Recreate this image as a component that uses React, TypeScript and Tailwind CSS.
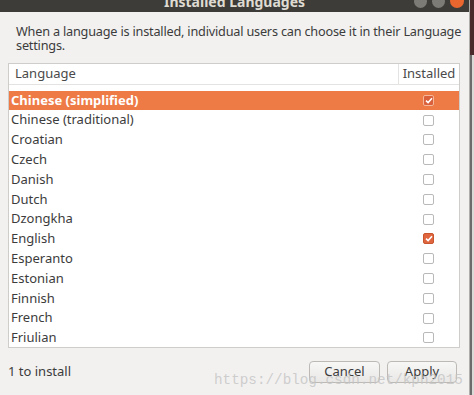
import React from "react";

type Lang = { name: string; installed: boolean };

const languages: Lang[] = [
  { name: "Chinese (simplified)", installed: true },
  { name: "Chinese (traditional)", installed: false },
  { name: "Croatian", installed: false },
  { name: "Czech", installed: false },
  { name: "Danish", installed: false },
  { name: "Dutch", installed: false },
  { name: "Dzongkha", installed: false },
  { name: "English", installed: true },
  { name: "Esperanto", installed: false },
  { name: "Estonian", installed: false },
  { name: "Finnish", installed: false },
  { name: "French", installed: false },
  { name: "Friulian", installed: false },
];

const Check = ({ checked, selected }: { checked: boolean; selected: boolean }) => {
  if (checked) {
    return (
      <div
        className={`w-[11px] h-[11px] rounded-[2px] flex items-center justify-center ${
          selected ? "bg-[#d9603a] border border-[#f4b79a]" : "bg-[#e0663f] border border-[#c9552f]"
        }`}
      >
        <svg width="8" height="7" viewBox="0 0 8 7">
          <path d="M1 3.6 L3.1 5.6 L7 1.2" fill="none" stroke="white" strokeWidth="1.6" />
        </svg>
      </div>
    );
  }
  return <div className="w-[11px] h-[11px] rounded-[2px] border border-[#b9b9b9] bg-white" />;
};

export default function App() {
  return (
    <div
      className="w-[474px] h-[395px] flex bg-[#f2f1f0] overflow-hidden relative"
      style={{ fontFamily: '"Noto Sans", "Open Sans", sans-serif' }}
    >
      <div className="w-[469px] flex flex-col">
        {/* title bar */}
        <div className="h-[12px] bg-[#3d3c38] relative overflow-hidden flex justify-center">
          <div className="text-[14px] font-bold text-[#dfdbd2] leading-none -mt-[5px]">Installed Languages</div>
          <div className="absolute right-[5px] -top-[6px] flex gap-[5px] items-center">
            <div className="w-[13px] h-[13px] rounded-full bg-[#7d7b76]" />
            <div className="w-[13px] h-[13px] rounded-full bg-[#7d7b76]" />
            <div className="w-[14px] h-[14px] rounded-full bg-[#e9662e]" />
          </div>
        </div>

        <p className="pl-[16px] pr-[4px] pt-[12px] text-[12.7px] leading-[14px] tracking-[-0.2px] text-[#3c3c3c]">
          When a language is installed, individual users can choose it in their Language settings.
        </p>

        {/* tree view */}
        <div className="ml-[8px] mt-[11px] w-[452px] h-[285px] border border-[#cfcdca] bg-white flex flex-col">
          <div className="h-[24px] flex border-b border-[#e4e3e1] text-[13px] text-[#4a4a4a]">
            <div className="flex-1 flex items-center pl-[6px] border-r border-[#e4e3e1]">Language</div>
            <div className="w-[60px] flex items-center justify-center">Installed</div>
          </div>
          <div className="pt-[6px]">
            {languages.map((l, i) => {
              const selected = i === 0;
              return (
                <div
                  key={l.name}
                  className={`h-[19.8px] flex items-center text-[13px] ${
                    selected ? "bg-[#ee7a45] text-white font-bold" : "text-[#3c3c3c]"
                  }`}
                >
                  <div className="flex-1 pl-[2px]">{l.name}</div>
                  <div className="w-[60px] flex justify-center pr-[1px]">
                    <Check checked={l.installed} selected={selected} />
                  </div>
                </div>
              );
            })}
          </div>
        </div>

        {/* footer */}
        <div className="flex items-center mt-[13px] pl-[8px] pr-[12px]">
          <div className="flex-1 text-[13px] text-[#3c3c3c]">1 to install</div>
          <div className="flex gap-[7px]">
            <button className="w-[71px] h-[22px] rounded-[4px] border border-[#bdbab6] bg-gradient-to-b from-[#f7f7f6] to-[#e9e8e6] text-[13px] text-[#3c3c3c]">
              Cancel
            </button>
            <button className="w-[70px] h-[22px] rounded-[4px] border border-[#bdbab6] bg-gradient-to-b from-[#f7f7f6] to-[#e9e8e6] text-[13px] text-[#3c3c3c]">
              Apply
            </button>
          </div>
        </div>
      </div>

      {/* background window edge */}
      <div className="flex-1 flex flex-col border-l border-[#b0aeab]">
        <div className="h-[55px] bg-[#4a2a2a]" />
        <div className="flex-1 bg-[#dcdad7] border-l-2 border-[#6b6b6b]" />
      </div>

      {/* watermark */}
      <div
        className="absolute left-[214px] top-[370px] text-[14.3px] text-[#c4c4c4]/80 pointer-events-none"
        style={{ fontFamily: '"Liberation Mono", monospace' }}
      >
        https://blog.csdn.net/kph2015
      </div>
    </div>
  );
}
